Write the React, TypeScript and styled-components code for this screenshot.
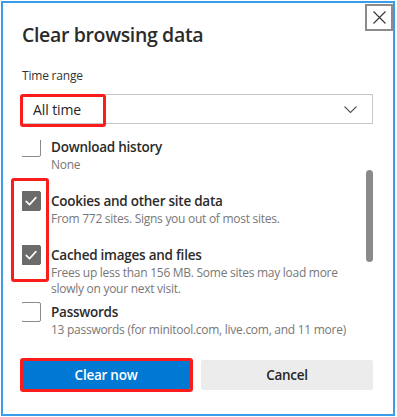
import React from 'react';
import styled, { createGlobalStyle } from 'styled-components';

const GlobalStyle = createGlobalStyle`
  html, body {
    margin: 0;
    padding: 0;
    background: #ffffff;
  }
  body {
    font-family: 'Open Sans', 'Noto Sans', sans-serif;
    color: #262626;
  }
  * {
    box-sizing: border-box;
  }
`;

type Item = {
  title: string;
  detail: string;
  checked: boolean;
};

const items: Item[] = [
  { title: 'Download history', detail: 'None', checked: false },
  {
    title: 'Cookies and other site data',
    detail: 'From 772 sites. Signs you out of most sites.',
    checked: true,
  },
  {
    title: 'Cached images and files',
    detail:
      'Frees up less than 156 MB. Some sites may load more slowly on your next visit.',
    checked: true,
  },
  {
    title: 'Passwords',
    detail: '13 passwords (for minitool.com, live.com, and 11 more)',
    checked: false,
  },
];

const App: React.FC = () => {
  return (
    <>
      <GlobalStyle />
      <Dialog>
        <Header>
          <Title>Clear browsing data</Title>
          <CloseButton aria-label="Close">
            <svg width="13" height="13" viewBox="0 0 13 13">
              <path
                d="M0.5 0.5 L12.5 12.5 M12.5 0.5 L0.5 12.5"
                stroke="#333"
                strokeWidth="1.1"
                fill="none"
              />
            </svg>
          </CloseButton>
        </Header>
        <Body>
          <FieldLabel>Time range</FieldLabel>
          <SelectBox>
            <SelectValue>All time</SelectValue>
            <svg width="13" height="7" viewBox="0 0 13 7">
              <path
                d="M0.5 0.5 L6.5 6.5 L12.5 0.5"
                stroke="#555"
                strokeWidth="1.1"
                fill="none"
              />
            </svg>
            <Highlight $left={-3} $top={-1} $width={86} $height={33} />
          </SelectBox>
          <ListWindow>
            <ListScroll>
              {items.map((item) => (
                <Row key={item.title}>
                  <CheckBox $checked={item.checked}>
                    {item.checked && (
                      <svg width="14" height="14" viewBox="0 0 14 14">
                        <path
                          d="M2.2 7.4 L5.5 10.6 L11.9 3.6"
                          stroke="#fff"
                          strokeWidth="1.6"
                          fill="none"
                          strokeLinecap="round"
                          strokeLinejoin="round"
                        />
                      </svg>
                    )}
                  </CheckBox>
                  <RowText>
                    <RowTitle>{item.title}</RowTitle>
                    <RowDetail>{item.detail}</RowDetail>
                  </RowText>
                </Row>
              ))}
            </ListScroll>
            <ScrollThumb />
            <Highlight $left={-11} $top={38} $width={38} $height={104} />
          </ListWindow>
          <Actions>
            <PrimaryButton>
              Clear now
              <Highlight $left={-2} $top={-2} $width={173} $height={34} />
            </PrimaryButton>
            <SecondaryButton>Cancel</SecondaryButton>
          </Actions>
        </Body>
      </Dialog>
    </>
  );
};

const Dialog = styled.div`
  margin: 1px 0 0 1px;
  width: 394px;
  height: 415px;
  border: 2px solid #3b9cec;
  background: #fff;
  display: flex;
  flex-direction: column;
`;

const Header = styled.div`
  display: flex;
  justify-content: space-between;
  align-items: flex-start;
  padding: 1px 0 0 19px;
`;

const Title = styled.h1`
  margin: 17px 0 0;
  font-size: 19.5px;
  line-height: 28px;
  font-weight: 600;
  color: #2b2b2b;
  letter-spacing: -0.35px;
`;

const CloseButton = styled.button`
  width: 28px;
  height: 27px;
  margin-right: 0;
  padding: 0;
  border: 2px solid #8c8c8c;
  background: #fff;
  display: flex;
  align-items: center;
  justify-content: center;
  cursor: pointer;
`;

const Body = styled.div`
  display: flex;
  flex-direction: column;
  padding: 0 20px 0 19px;
`;

const FieldLabel = styled.div`
  margin-top: 19px;
  font-size: 12px;
  line-height: 16px;
  letter-spacing: -0.2px;
  color: #333;
`;

const SelectBox = styled.div`
  position: relative;
  margin-top: 10px;
  height: 30px;
  border: 1px solid #c6c6c6;
  display: flex;
  align-items: center;
  justify-content: space-between;
  padding: 0 15px 0 10px;
`;

const SelectValue = styled.span`
  font-size: 14px;
  letter-spacing: -0.1px;
  color: #262626;
`;

const Highlight = styled.div<{
  $left: number;
  $top: number;
  $width: number;
  $height: number;
}>`
  position: absolute;
  left: ${(p) => p.$left}px;
  top: ${(p) => p.$top}px;
  width: ${(p) => p.$width}px;
  height: ${(p) => p.$height}px;
  border: 3px solid #fb1c1c;
  border-radius: 3px;
  pointer-events: none;
`;

const ListWindow = styled.div`
  position: relative;
  margin-top: 16px;
  height: 206px;
`;

const ListScroll = styled.div`
  height: 100%;
  overflow: hidden;
  padding-right: 20px;
  > div:first-child {
    margin-top: -3px;
  }
`;

const Row = styled.div`
  display: flex;
  align-items: flex-start;
  gap: 10px;
  min-height: 54px;
  padding-bottom: 5px;
`;

const CheckBox = styled.div<{ $checked: boolean }>`
  flex: none;
  width: 20px;
  height: 20px;
  margin-left: -1px;
  border-radius: 2px;
  display: flex;
  align-items: center;
  justify-content: center;
  background: ${(p) => (p.$checked ? '#6b6b6b' : '#fff')};
  border: 1px solid ${(p) => (p.$checked ? '#6b6b6b' : '#8a8a8a')};
`;

const RowText = styled.div`
  display: flex;
  flex-direction: column;
`;

const RowTitle = styled.div`
  font-size: 13.5px;
  line-height: 20px;
  font-weight: 600;
  letter-spacing: -0.25px;
  color: #2b2b2b;
`;

const RowDetail = styled.div`
  font-size: 12px;
  line-height: 16px;
  letter-spacing: -0.27px;
  color: #777;
`;

const ScrollThumb = styled.div`
  position: absolute;
  right: 0;
  top: 30px;
  width: 7px;
  height: 92px;
  border-radius: 4px;
  background: #8a8a8a;
`;

const Actions = styled.div`
  display: grid;
  grid-template-columns: 168px 1fr;
  gap: 11px;
  margin-top: 14px;
`;

const ButtonBase = styled.button`
  position: relative;
  height: 30px;
  border: none;
  border-radius: 2px;
  font-family: 'Open Sans', 'Noto Sans', sans-serif;
  font-size: 13.5px;
  font-weight: 600;
  letter-spacing: -0.25px;
  cursor: pointer;
`;

const PrimaryButton = styled(ButtonBase)`
  background: #0078d4;
  color: #fff;
`;

const SecondaryButton = styled(ButtonBase)`
  background: #ececec;
  color: #262626;
`;

export default App;
